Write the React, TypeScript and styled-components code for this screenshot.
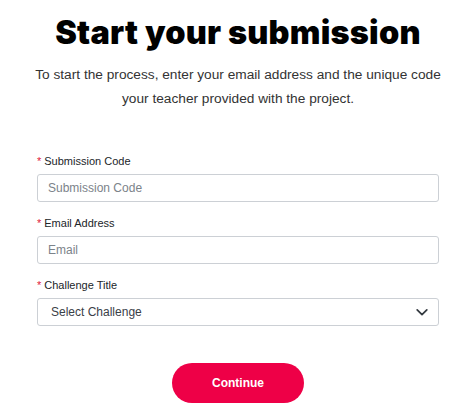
import styled, { createGlobalStyle } from "styled-components";

const GlobalStyle = createGlobalStyle`
  body {
    margin: 0;
    background: #fff;
    font-family: "Liberation Sans", Arial, sans-serif;
  }
`;

const Page = styled.div`
  width: 469px;
  padding: 12px 30px 0 37px;
  box-sizing: border-box;
`;

const Title = styled.h1`
  margin: 0;
  text-align: center;
  font-family: Inter, "Liberation Sans", sans-serif;
  font-weight: 900;
  font-size: 32.5px;
  line-height: 42px;
  color: #000;
  letter-spacing: 0.2px;
`;

const Lead = styled.p`
  margin: 9px -8px 0;
  text-align: center;
  font-size: 13.7px;
  line-height: 24px;
  color: #333;
`;

const Form = styled.form`
  display: flex;
  flex-direction: column;
  margin-top: 43px;
`;

const Field = styled.div`
  display: flex;
  flex-direction: column;
  margin-bottom: 14px;
`;

const Label = styled.label`
  font-size: 11px;
  line-height: 14px;
  color: #212529;
  margin-bottom: 6px;
`;

const Star = styled.span`
  color: #e0203d;
  margin-right: 3px;
`;

const Input = styled.input`
  height: 28px;
  box-sizing: border-box;
  border: 1px solid #ccd0d5;
  border-radius: 3px;
  padding: 0 10px;
  font-family: "Liberation Sans", Arial, sans-serif;
  font-size: 12px;
  color: #212529;
  &::placeholder {
    color: #7c838a;
  }
`;

const SelectBox = styled.div`
  height: 28px;
  box-sizing: border-box;
  border: 1px solid #ccd0d5;
  border-radius: 3px;
  padding: 0 9px 0 13px;
  display: flex;
  align-items: center;
  justify-content: space-between;
  font-size: 12px;
  color: #3a4047;
`;

const Actions = styled.div`
  display: flex;
  justify-content: center;
  margin-top: 23px;
`;

const Button = styled.button`
  width: 132px;
  height: 40px;
  border: 0;
  border-radius: 20px;
  background: #ee0047;
  color: #fff;
  font-family: "Liberation Sans", Arial, sans-serif;
  font-weight: 700;
  font-size: 12px;
`;

export default function App() {
  return (
    <>
      <GlobalStyle />
      <Page>
        <Title>Start your submission</Title>
        <Lead>
          To start the process, enter your email address and the unique code
          your teacher provided with the project.
        </Lead>
        <Form>
          <Field>
            <Label>
              <Star>*</Star>Submission Code
            </Label>
            <Input placeholder="Submission Code" />
          </Field>
          <Field>
            <Label>
              <Star>*</Star>Email Address
            </Label>
            <Input placeholder="Email" />
          </Field>
          <Field>
            <Label>
              <Star>*</Star>Challenge Title
            </Label>
            <SelectBox>
              Select Challenge
              <svg width="14" height="14" viewBox="0 0 16 16">
                <path
                  d="M2.5 5.5l5.5 5.5 5.5-5.5"
                  fill="none"
                  stroke="#343a40"
                  strokeWidth="2"
                  strokeLinecap="round"
                  strokeLinejoin="round"
                />
              </svg>
            </SelectBox>
          </Field>
          <Actions>
            <Button type="button">Continue</Button>
          </Actions>
        </Form>
      </Page>
    </>
  );
}
